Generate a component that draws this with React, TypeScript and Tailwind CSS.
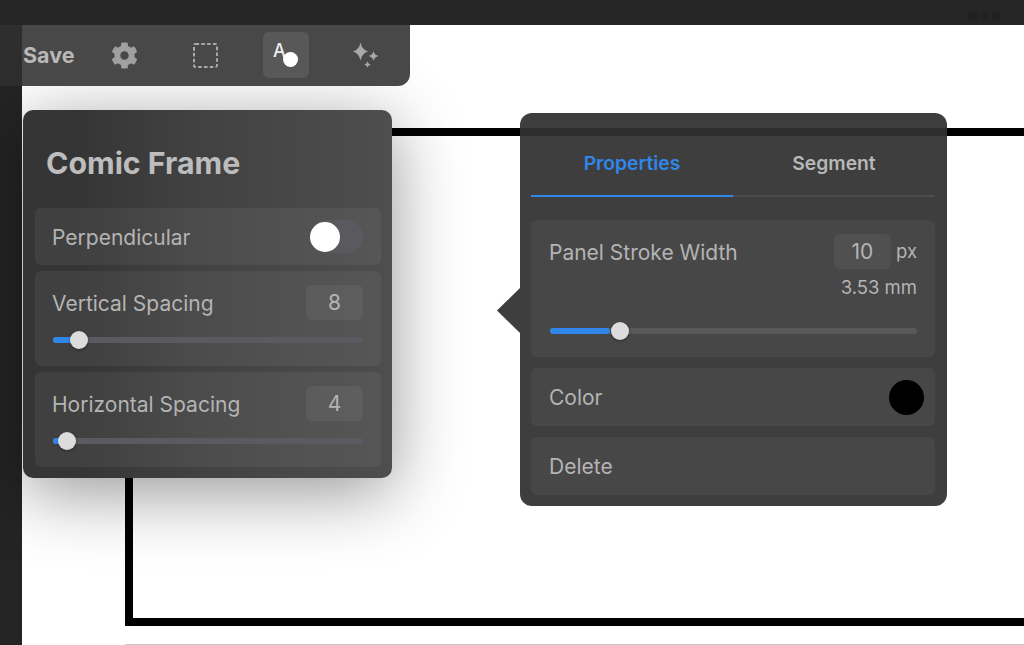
import { FaCog } from "react-icons/fa";

const font = { fontFamily: "Inter, 'Liberation Sans', sans-serif" };

function Slider({ fill, knob, track = "bg-[#5a5a60]" }: { fill: number; knob: number; track?: string }) {
  return (
    <div className={`relative h-[6px] rounded-full ${track}`}>
      <div className="h-full rounded-full bg-[#3186ea]" style={{ width: fill }} />
      <div
        className="absolute top-[-6px] size-[18px] rounded-full bg-[#dcdcdc] shadow-[0_1px_3px_rgba(0,0,0,0.35)]"
        style={{ left: knob }}
      />
    </div>
  );
}

function ValueBox({ value }: { value: string }) {
  return (
    <div className="flex h-[35px] w-[57px] items-center justify-center rounded-md bg-white/[0.05] text-[21px] text-[#b4b4b4]">
      {value}
    </div>
  );
}

function Label({ children }: { children: string }) {
  return <span className="pt-[2px] text-[21px] text-[#b4b4b4]">{children}</span>;
}

function SpacingRow({ label, value, fill, knob }: { label: string; value: string; fill: number; knob: number }) {
  return (
    <div className="flex h-[95px] flex-col rounded-md bg-white/[0.055] pl-[17px] pr-[18px] pt-[14px]">
      <div className="flex items-center justify-between">
        <Label>{label}</Label>
        <ValueBox value={value} />
      </div>
      <div className="ml-[1px] mt-[17px]">
        <Slider fill={fill} knob={knob} />
      </div>
    </div>
  );
}

function Toolbar() {
  return (
    <div className="absolute left-[22px] top-[25px] flex h-[61px] w-[388px] items-center rounded-br-xl bg-[#484848] text-[#ababab]">
      <span className="ml-[1px] w-[52px] text-[21.500px] font-bold text-[#b8b8b8]">Save</span>
      <FaCog className="ml-[36px] size-[27px] text-[#a0a0a0]" />
      <svg className="ml-[55px] size-[25px]" viewBox="0 0 25 25" fill="none">
        <rect x="1" y="1" width="23" height="23" rx="1.5" stroke="#a8a8a8" strokeWidth="2" strokeDasharray="3.6 2.2" />
      </svg>
      <div className="relative mb-[2px] ml-[45px] size-[46px] rounded-md bg-[#585858]">
        <span className="absolute left-[10px] top-[9px] text-[18px] leading-[20px] font-medium text-[#eeeeee]">A</span>
        <div className="absolute left-[20px] top-[20px] size-[15px] rounded-full bg-white" />
      </div>
      <svg className="ml-[43px] size-[28px]" viewBox="0 0 28 28" fill="#a8a8a8">
        <path d="M8.500 0.500 Q9.800 7.500 16 9.500 Q9.800 11.500 8.500 18.500 Q7.200 11.500 1 9.500 Q7.200 7.500 8.500 0.500Z" />
        <path d="M21.500 9 Q22.200 13 26.500 14 Q22.200 15 21.500 19 Q20.800 15 16.500 14 Q20.800 13 21.500 9Z" />
        <path d="M15.500 19 Q16 22 19 22.500 Q16 23 15.500 26 Q15 23 12 22.500 Q15 22 15.500 19Z" />
      </svg>
    </div>
  );
}

function ComicFramePanel() {
  return (
    <div className="absolute left-[23px] top-[110px] flex h-[368px] w-[369px] flex-col rounded-[10px] bg-linear-to-r from-[#353535] from-15% via-[#414141] via-45% to-[#4e4e4e] pl-[12px] pr-[11px] shadow-[0_14px_70px_rgba(0,0,0,0.42)]">
      <h2 className="ml-[11px] mt-[35px] text-[30.300px] leading-[36px] font-bold text-[#bdbdbd]">Comic Frame</h2>
      <div className="mt-[27px] flex h-[57px] items-center justify-between rounded-md bg-white/[0.055] pl-[17px] pr-[18px]">
        <Label>Perpendicular</Label>
        <div className="flex h-[33px] w-[53px] items-center rounded-full bg-[#5a5a5e]">
          <div className="size-[30px] rounded-full bg-white" />
        </div>
      </div>
      <div className="mt-[6px] flex flex-col gap-[6px]">
        <SpacingRow label="Vertical Spacing" value="8" fill={26} knob={17} />
        <SpacingRow label="Horizontal Spacing" value="4" fill={14} knob={5} />
      </div>
    </div>
  );
}

function PropertiesPanel() {
  return (
    <div className="absolute left-[520px] top-[113px] flex h-[393px] w-[427px] flex-col rounded-xl bg-[#3e3e3e] pl-[11px] pr-[12px]">
      {/* frame line seen through the panel */}
      <div className="absolute inset-x-0 top-[15px] h-[8px] bg-[#2d2d2d]" />
      {/* pointer */}
      <div className="absolute left-[-23px] top-[175px] h-[45px] w-[23px] bg-[#3e3e3e] [clip-path:polygon(100%_0,100%_100%,0_50%)]" />
      <div className="relative mt-[33px] flex text-[19.300px] leading-[34px] font-semibold">
        <div className="w-[202px] text-center text-[#3186ea]">Properties</div>
        <div className="flex-1 text-center text-[#b8b8b8]">Segment</div>
      </div>
      <div className="mt-[15px] flex h-[2px]">
        <div className="w-[202px] bg-[#3186ea]" />
        <div className="flex-1 bg-[#4c4c4c]" />
      </div>
      <div className="mt-[23px] flex h-[137px] flex-col rounded-md bg-[#474747] pl-[18px] pr-[18px] pt-[14px]">
        <div className="flex items-center justify-between">
          <Label>Panel Stroke Width</Label>
          <div className="flex items-center gap-[5px]">
            <ValueBox value="10" />
            <span className="text-[18.500px] text-[#b4b4b4]">px</span>
          </div>
        </div>
        <div className="mt-[5px] text-right text-[18.500px] leading-[26px] text-[#b4b4b4]">3.53 mm</div>
        <div className="ml-[1px] mt-[28px]">
          <Slider fill={60} knob={61} track="bg-[#585858]" />
        </div>
      </div>
      <div className="mt-[11px] flex h-[58px] items-center justify-between rounded-md bg-[#474747] pl-[18px] pr-[11px]">
        <Label>Color</Label>
        <div className="size-[35px] rounded-full bg-black" />
      </div>
      <div className="mt-[11px] flex h-[58px] items-center rounded-md bg-[#474747] pl-[18px]">
        <Label>Delete</Label>
      </div>
    </div>
  );
}

export default function App() {
  return (
    <div className="relative flex h-[645px] w-[1024px] flex-col overflow-hidden bg-white" style={font}>
      <div className="flex h-[25px] shrink-0 items-center justify-end gap-[4px] bg-[#262626] pr-[23px] pt-[6px]">
        <div className="size-[8px] rounded-full bg-[#212121] blur-[1px]" />
        <div className="size-[8px] rounded-full bg-[#212121] blur-[1px]" />
        <div className="size-[8px] rounded-full bg-[#212121] blur-[1px]" />
      </div>
      <div className="flex min-h-0 flex-1">
        <div className="w-[22px] shrink-0 bg-[#242424]">
          <div className="h-[61px] bg-[#2e2e2e]" />
        </div>
        <div className="relative flex-1">
          {/* comic frame drawn on the canvas */}
          <div className="absolute left-[103px] top-[103px] h-[498px] w-[1000px] border-8 border-black" />
          <div className="absolute bottom-0 left-[103px] h-px w-[1000px] bg-[#c8c8c8]" />
        </div>
      </div>
      <ComicFramePanel />
      <Toolbar />
      <PropertiesPanel />
    </div>
  );
}
